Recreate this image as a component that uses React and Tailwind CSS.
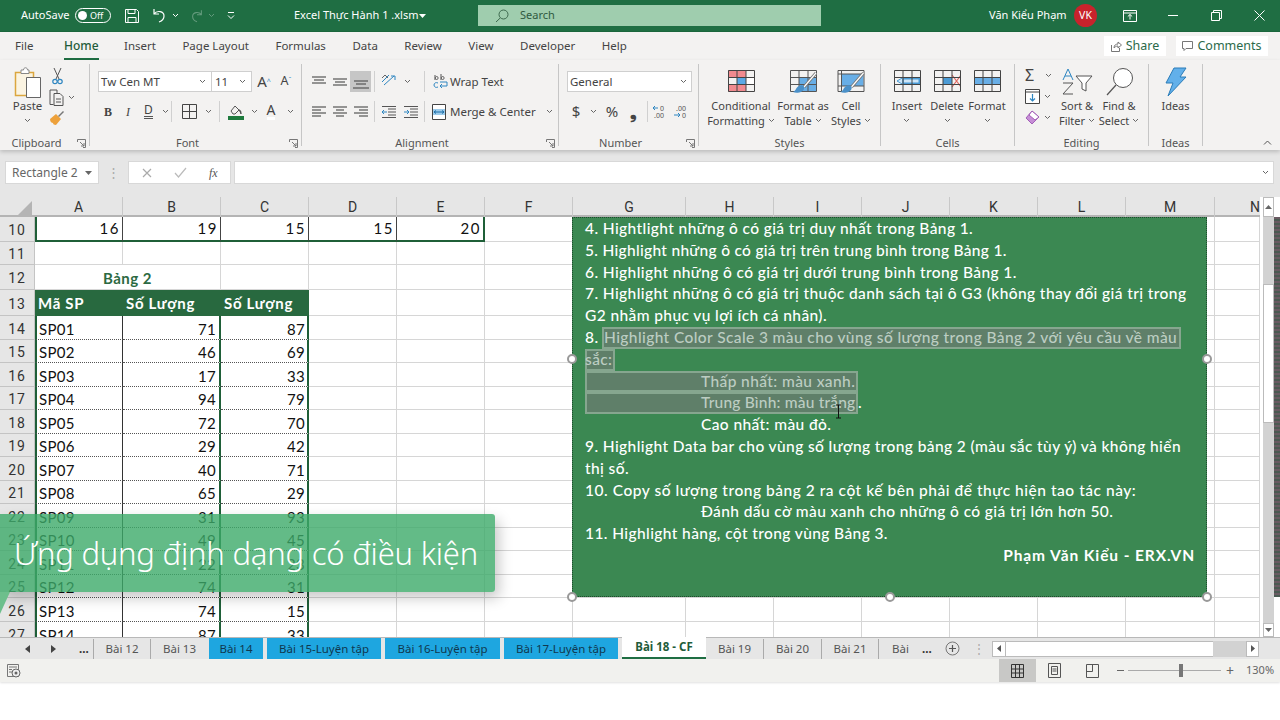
import React from 'react';

const Chev = ({ className = 'text-[#666]' }) => (
  <svg width="7" height="5" viewBox="0 0 7 5" className={className}>
    <path d="M1 1l2.500 2.500L6 1" fill="none" stroke="currentColor" strokeWidth="1" />
  </svg>
);

const Launcher = () => (
  <svg width="9" height="9" viewBox="0 0 9 9" className="text-[#777]">
    <path d="M.5 3V.5h8V8.500H6M3 3l4 4M4 7h3V4" fill="none" stroke="currentColor" strokeWidth="1" />
  </svg>
);

const Lines = ({ rows }) => (
  <svg width="18" height="16" viewBox="0 0 18 16" className="text-[#555]">
    {rows.map((r, i) => (
      <path key={i} d={`M${r[0]} ${r[2]}H${r[1]}`} stroke="currentColor" strokeWidth="1.200" />
    ))}
  </svg>
);

const TOP = [[2, 16, 3], [4, 14, 6], [2, 16, 9]];
const MID = [[2, 16, 5], [4, 14, 8], [2, 16, 11]];
const BOT = [[2, 16, 7], [4, 14, 10], [1, 17, 14]];
const LEFT = [[2, 16, 3], [2, 11, 6], [2, 16, 9], [2, 11, 12]];
const CENTER = [[2, 16, 3], [5, 13, 6], [2, 16, 9], [5, 13, 12]];
const RIGHT = [[2, 16, 3], [7, 16, 6], [2, 16, 9], [7, 16, 12]];

// grid used by the big Styles / Cells buttons
const GridIcon = ({ children, w = 27, h = 22 }) => (
  <svg width={w} height={h} viewBox="0 0 27 22">
    {children}
    <path d="M.5.500h26v21H.5zM.5 7.500h26M.5 14.500h26M9 .5v21M18 .5v21" fill="none" stroke="#444" strokeWidth="1" />
  </svg>
);

const Brush = () => (
  <g>
    <path d="M26 3L14 17" stroke="#777" strokeWidth="3" />
    <path d="M26 3L14 17" stroke="#fff" strokeWidth="1.200" />
    <path d="M9 16c3-2 6 0 5 3-1 3-7 5-11 3 3-1 3-5 6-6z" fill="#4a90c8" />
  </g>
);

const Big = ({ icon, lines, chev, last, className }) => (
  <div className={`flex flex-col items-center shrink-0 ${className}`}>
    <div className="h-[31px] pt-[6px] flex justify-center">{icon}</div>
    <div className="mt-[3px] leading-[15px] text-[11px] text-center whitespace-nowrap text-[#444]">
      <div>{lines[0]}</div>
      {lines[1] ? (
        <div className="flex items-center justify-center gap-[3px]">
          {lines[1]}
          {chev && <Chev />}
        </div>
      ) : (
        <div className="h-[15px] flex items-center justify-center">{last && <Chev />}</div>
      )}
    </div>
  </div>
);

const Group = ({ label, width, launcher, children }) => (
  <div className={`shrink-0 relative flex flex-col h-[82px] mt-[4px] border-r border-[#c6c6c6] ${width}`}>
    <div className="h-[72px] shrink-0 flex">{children}</div>
    <div className={`h-[12px] shrink-0 flex items-center justify-center text-[11px] text-[#555] leading-none ${launcher ? 'pr-[16px]' : ''}`}>{label}</div>
    {launcher && (
      <span className="absolute right-[3px] bottom-[-2px]">
        <Launcher />
      </span>
    )}
  </div>
);

function TitleBar() {
  return (
    <div className="h-8 shrink-0 bg-[#1f6e43] flex items-center text-white text-[11px] pl-[21px] border-b border-[#1b663d]">
      <span className="w-[54px]">AutoSave</span>
      <span className="w-[36px] h-[15px] rounded-full border border-white flex items-center pl-[2px] gap-[3px] text-[9px] leading-none">
        <span className="w-[9px] h-[9px] rounded-full bg-white" />
        Off
      </span>
      <svg width="16" height="16" viewBox="0 0 16 16" className="ml-[13px]">
        <path d="M1.500 1.500h11l2 2v11h-13zM4 1.500v4h7v-4M4 14.500v-5h8v5" fill="none" stroke="#fff" strokeWidth="1" />
      </svg>
      <svg width="16" height="15" viewBox="0 0 16 15" className="ml-[11px]">
        <path d="M3 1v5h5M3 6c3-4 10-3 10 2 0 3-2 5-5 6" fill="none" stroke="#fff" strokeWidth="1.200" />
      </svg>
      <Chev className="text-white ml-[5px]" />
      <svg width="14" height="14" viewBox="0 0 16 15" className="ml-[11px] opacity-30">
        <path d="M13 1v5H8M13 6C10 2 3 3 3 8c0 3 2 5 5 6" fill="none" stroke="#fff" strokeWidth="1.200" />
      </svg>
      <Chev className="text-white opacity-30 ml-[4px]" />
      <svg width="8" height="9" viewBox="0 0 8 9" className="ml-[12px]">
        <path d="M1 1.500h6M1 4.500l3 3 3-3" fill="none" stroke="#fff" strokeWidth="1" />
      </svg>
      <span className="ml-[59px] w-[124px] whitespace-nowrap">Excel Thực Hành 1 .xlsm</span>
      <svg width="7" height="4" viewBox="0 0 7 4" className="ml-[1px]">
        <path d="M0 0h7L3.500 4z" fill="#fff" />
      </svg>
      <div className="ml-[52px] w-[343px] h-[21px] bg-[#9fcdae] flex items-center pl-[17px] gap-[11px] text-[#2f5a40]">
        <svg width="14" height="14" viewBox="0 0 14 14">
          <circle cx="8.500" cy="5.500" r="4.500" fill="none" stroke="#3d6a4e" strokeWidth="1" />
          <path d="M5.200 9L1 13" stroke="#3d6a4e" strokeWidth="1" />
        </svg>
        Search
      </div>
      <span className="ml-[168px] w-[76px] whitespace-nowrap">Văn Kiểu Phạm</span>
      <span className="ml-[9px] w-[23px] h-[23px] rounded-full bg-[#c8232c] flex items-center justify-center text-[10.500px]">VK</span>
      <svg width="14" height="12" viewBox="0 0 14 12" className="ml-[26px]">
        <path d="M.5.500h13v11H.5zM.5 3h13M7 9.500V4.500M4.800 6.500L7 4.500l2.200 2" fill="none" stroke="#fff" strokeWidth="1" />
      </svg>
      <span className="ml-[31px] w-[10px] h-px bg-white" />
      <svg width="11" height="11" viewBox="0 0 11 11" className="ml-[33px]">
        <path d="M.5 2.500h8v8h-8zM2.500 2.500v-2h8v8h-2" fill="none" stroke="#fff" strokeWidth="1" />
      </svg>
      <svg width="11" height="11" viewBox="0 0 11 11" className="ml-[32px]">
        <path d="M.5.500l10 10M10.500.5l-10 10" stroke="#fff" strokeWidth="1" />
      </svg>
    </div>
  );
}

function TabRow() {
  const tabs = ['Insert', 'Page Layout', 'Formulas', 'Data', 'Review', 'View', 'Developer', 'Help'];
  return (
    <div className="h-7 shrink-0 bg-[#f3f2f1] flex items-center text-[11.500px] text-[#444] pl-[15px]">
      <span className="w-[49px]">File</span>
      <span className="relative w-[60px] text-[#1f5c3a] font-medium text-[12px]">
        Home
        <span className="absolute left-0 top-[21px] w-[35px] h-[3px] bg-[#1f6e43]" />
      </span>
      <div className="flex gap-[26.500px]">
        {tabs.map((t) => (
          <span key={t} className="whitespace-nowrap">{t}</span>
        ))}
      </div>
      <span className="ml-auto h-[20px] w-[62px] bg-white flex items-center justify-center gap-[4px] text-[#2c6a4a] text-[12.500px]">
        <svg width="11" height="11" viewBox="0 0 11 11">
          <path d="M.5 4v6.500h8V7M3 7c0-3 2-4 4-4V1l3.500 3L7 7V5C5 5 4 6 3 7z" fill="none" stroke="#777" strokeWidth="1" />
        </svg>
        Share
      </span>
      <span className="ml-[10px] mr-[12px] h-[20px] w-[92px] bg-white flex items-center justify-center gap-[4px] text-[#2c6a4a] text-[12.500px]">
        <svg width="11" height="11" viewBox="0 0 11 11">
          <path d="M.5.500h10v7H4l-2 2v-2H.5z" fill="none" stroke="#777" strokeWidth="1" />
        </svg>
        Comments
      </span>
    </div>
  );
}

const Cell = ({ w = 'w-[21px]', children, sel }) => (
  <span className={`h-[21px] flex items-center justify-center shrink-0 ${w} ${sel ? 'bg-[#c6c6c6]' : ''}`}>{children}</span>
);
const VSep = () => <span className="w-px h-[21px] bg-[#d0d0d0] shrink-0" />;

function Ribbon() {
  return (
    <div className="h-[90px] shrink-0 bg-[#f3f2f1] flex shadow-[0_2px_4px_rgba(0,0,0,0.18)] relative z-10 text-[#444]">
      <Group label="Clipboard" width="w-[90px]" launcher>
        <div className="w-[54px] flex flex-col items-center pl-[1px]">
          <svg width="28" height="32" viewBox="0 0 28 32" className="mt-[2px] shrink-0">
            <path d="M1.500 6.500h18v23h-18z" fill="#fbf4e2" stroke="#dba63f" strokeWidth="1.500" />
            <path d="M7 6.500V4h2.500c0-3 4-3 4 0H15v3.500H7z" fill="#fff" stroke="#888" strokeWidth="1" />
            <path d="M12.500 11.500h14v20h-14z" fill="#fff" stroke="#666" strokeWidth="1" />
          </svg>
          <span className="text-[11.500px] leading-[15px]">Paste</span>
          <span className="mt-[5px] flex"><Chev /></span>
        </div>
        <div className="flex flex-col pt-[3px] gap-[4px] items-start">
          <svg width="11" height="18" viewBox="0 0 11 18" className="ml-[-2px]">
            <path d="M2 1l5 11M9 1L4 12" stroke="#555" strokeWidth="1" />
            <circle cx="3" cy="14.500" r="2.200" fill="none" stroke="#2e86c1" strokeWidth="1.200" />
            <circle cx="8" cy="14.500" r="2.200" fill="none" stroke="#2e86c1" strokeWidth="1.200" />
          </svg>
          <span className="flex items-center gap-[3px] ml-[-5px]">
            <svg width="16" height="17" viewBox="0 0 16 17">
              <path d="M4.500 15.500H1V1h7v3M5 4.500h6l3 3v9H5z" fill="#f3f2f1" stroke="#555" strokeWidth="1" />
              <path d="M7 10h5M7 13h5" stroke="#555" strokeWidth="1" />
            </svg>
            <Chev />
          </span>
          <svg width="16" height="16" viewBox="0 0 16 16" className="ml-[-5px]">
            <path d="M1 9l6-5 5 5-5 6c-2 0-3-1-3-2-1 0-3-1-3-4z" fill="#eda13b" />
            <path d="M9 6l5-5 1 1-5 5z" fill="#777" />
          </svg>
        </div>
      </Group>

      <Group label="Font" width="w-[212px]" launcher>
        <div className="flex flex-col pl-[8px] pt-[7px]">
          <div className="flex items-center">
            <span className="w-[114px] h-[21px] bg-white border border-[#cfcfcf] flex items-center justify-between pl-[2px] pr-[5px] text-[11.500px]">
              Tw Cen MT <Chev />
            </span>
            <span className="w-[40px] h-[21px] bg-white border border-l-0 border-[#cfcfcf] flex items-center justify-between pl-[3px] pr-[5px] text-[11.500px]">
              11 <Chev />
            </span>
            <span className="w-[22px] text-center text-[15px] leading-none ml-[1px]">A<sup className="text-[7px] text-[#2e86c1]">^</sup></span>
            <span className="w-[22px] text-center text-[12.500px] leading-none">A<sup className="text-[7px] text-[#2e86c1]">ˇ</sup></span>
          </div>
          <div className="flex items-center mt-[9px] h-[21px]">
            <Cell w="w-[20px]"><b className="text-[12px] font-['Liberation_Serif',serif]">B</b></Cell>
            <Cell w="w-[20px]"><i className="text-[12px] font-['Liberation_Serif',serif]">I</i></Cell>
            <Cell w="w-[21px]"><span className="text-[12px] leading-[12px] border-b-[3px] border-double border-[#555]">D</span></Cell>
            <Cell w="w-[12px]"><Chev /></Cell>
            <VSep />
            <Cell w="w-[29px]">
              <svg width="15" height="15" viewBox="0 0 15 15" className="ml-[5px]">
                <path d="M.5.500h14v14H.5zM7.500.5v14M.5 7.500h14" fill="none" stroke="#444" strokeWidth="1" />
              </svg>
            </Cell>
            <Cell w="w-[15px]"><Chev /></Cell>
            <Cell w="w-[3px]" />
            <VSep />
            <Cell w="w-[27px]">
              <svg width="16" height="16" viewBox="0 0 16 16" className="ml-[4px]">
                <path d="M3 7l4-5 4 4-4 4H5z" fill="none" stroke="#555" strokeWidth="1" />
                <path d="M11 6c2 1 2 3 2 4" stroke="#555" strokeWidth="1.500" fill="none" />
                <path d="M0 12h16v4H0z" fill="#1e7a3d" />
              </svg>
            </Cell>
            <Cell w="w-[14px]"><Chev /></Cell>
            <Cell w="w-[20px]"><span className="text-[14px] leading-[14px] border-b-[3px] border-white">A</span></Cell>
            <Cell w="w-[18px]"><Chev /></Cell>
          </div>
        </div>
      </Group>

      <Group label="Alignment" width="w-[257px]" launcher>
        <div className="flex flex-col pl-[6px] pt-[7px]">
          <div className="flex items-center">
            <Cell><Lines rows={TOP} /></Cell>
            <Cell><Lines rows={MID} /></Cell>
            <Cell sel><Lines rows={BOT} /></Cell>
            <Cell w="w-[3px]" />
            <VSep />
            <Cell w="w-[28px]">
              <svg width="16" height="15" viewBox="0 0 16 15">
                <path d="M1 8l7-7M3 11l10-9" stroke="#2e86c1" strokeWidth="1" />
                <path d="M10 2h4v4" fill="none" stroke="#2e86c1" strokeWidth="1" />
                <path d="M1 4l3-3 3 3" fill="none" stroke="#666" strokeWidth="1" />
              </svg>
            </Cell>
            <Cell w="w-[8px]"><Chev /></Cell>
            <Cell w="w-[13px]" />
            <VSep />
            <span className="ml-[8px] flex items-center gap-[1px] text-[11.500px] whitespace-nowrap">
              <svg width="16" height="17" viewBox="0 0 16 17">
                <path d="M2 2v5M2 5c1-2 3-2 3 0s-2 2-3 0zM8 1v6M8 5c1-2 3-2 3 0s-2 2-3 0z" fill="none" stroke="#555" strokeWidth="1" />
                <path d="M5 10c-2-1-4 0-4 2s2 3 4 2" fill="none" stroke="#2e86c1" strokeWidth="1" />
                <path d="M7 9h7v4H7M9 11l-2 2 2 2" fill="none" stroke="#2e86c1" strokeWidth="1" />
              </svg>
              Wrap Text
            </span>
          </div>
          <div className="flex items-center mt-[9px]">
            <Cell><Lines rows={LEFT} /></Cell>
            <Cell><Lines rows={CENTER} /></Cell>
            <Cell><Lines rows={RIGHT} /></Cell>
            <Cell w="w-[3px]" />
            <VSep />
            <Cell w="w-[28px]">
              <svg width="14" height="14" viewBox="0 0 14 14">
                <path d="M6 4h8M6 7h8M6 10h8M0 12.500h14M0 1.500h14" stroke="#555" strokeWidth="1" />
                <path d="M5 7H0M2 5L0 7l2 2" fill="none" stroke="#2e86c1" strokeWidth="1" />
              </svg>
            </Cell>
            <Cell w="w-[16px]">
              <svg width="14" height="14" viewBox="0 0 14 14">
                <path d="M6 4h8M6 7h8M6 10h8M0 12.500h14M0 1.500h14" stroke="#555" strokeWidth="1" />
                <path d="M0 7h5M3 5l2 2-2 2" fill="none" stroke="#2e86c1" strokeWidth="1" />
              </svg>
            </Cell>
            <Cell w="w-[5px]" />
            <VSep />
            <span className="ml-[7px] flex items-center gap-[4px] text-[11.500px] whitespace-nowrap">
              <svg width="14" height="16" viewBox="0 0 14 16">
                <path d="M.5.500h13v15H.5z" fill="#fff" stroke="#444" strokeWidth="1" />
                <path d="M1 5h12v6H1z" fill="#9ccbeb" />
                <path d="M2 8h10M4 6.500L2 8l2 1.500M10 6.500L12 8l-2 1.500" fill="none" stroke="#1c6fa8" strokeWidth="1" />
              </svg>
              Merge & Center
              <span className="ml-[6px] flex"><Chev /></span>
            </span>
          </div>
        </div>
      </Group>

      <Group label="Number" width="w-[140px]" launcher>
        <div className="flex flex-col pl-[8px] pt-[7px]">
          <span className="w-[125px] h-[21px] bg-white border border-[#cfcfcf] flex items-center justify-between pl-[2px] pr-[4px] text-[11.500px]">
            General <Chev />
          </span>
          <div className="flex items-center mt-[9px] text-[#444]">
            <Cell w="w-[18px]"><span className="text-[15px]">$</span></Cell>
            <Cell w="w-[17px]"><Chev /></Cell>
            <Cell w="w-[20px]"><span className="text-[15px]">%</span></Cell>
            <Cell w="w-[22px]"><b className="text-[17px] leading-[14px]">❟</b></Cell>
            <Cell w="w-[3px]" />
            <VSep />
            <Cell w="w-[24px]">
              <svg width="16" height="15" viewBox="0 0 16 15" className="overflow-visible">
                <text x="8" y="6.500" fontSize="7" fill="#555" fontFamily="Noto Sans">0</text>
                <text x="2" y="14" fontSize="7" fill="#555" fontFamily="Noto Sans">.00</text>
                <path d="M6 4H1M3 2L1 4l2 2" fill="none" stroke="#2e86c1" strokeWidth="1" />
              </svg>
            </Cell>
            <Cell w="w-[18px]">
              <svg width="16" height="15" viewBox="0 0 16 15" className="overflow-visible">
                <text x="3" y="6.500" fontSize="7" fill="#555" fontFamily="Noto Sans">.00</text>
                <text x="9" y="14" fontSize="7" fill="#555" fontFamily="Noto Sans">0</text>
                <path d="M1 11h6M5 9l2 2-2 2" fill="none" stroke="#2e86c1" strokeWidth="1" />
              </svg>
            </Cell>
          </div>
        </div>
      </Group>

      <Group label="Styles" width="w-[182px]">
        <Big
          className="w-[84px]"
          chev
          lines={['Conditional', 'Formatting']}
          icon={
            <GridIcon>
              <path d="M0 0h18v7H0zM9 14h9V7H9zM0 14h18v8H0z" fill="#f08a8f" />
              <path d="M9 7h9v7H9z" fill="#5aa9e6" />
              <path d="M18 7h9v7h-9z" fill="#fff" />
            </GridIcon>
          }
        />
        <Big
          className="w-[40px]"
          chev
          lines={['Format as', 'Table']}
          icon={
            <svg width="27" height="23" viewBox="0 0 27 23">
              <path d="M9 7h17v15H9z" fill="#68aee6" />
              <path d="M.5.500h26v21H.5zM.5 7.500h26M.5 14.500h26M9 .5v21M18 .5v21" fill="none" stroke="#555" strokeWidth="1" />
              <Brush />
            </svg>
          }
        />
        <Big
          className="w-[56px]"
          chev
          lines={['Cell', 'Styles']}
          icon={
            <svg width="28" height="23" viewBox="0 0 27 23">
              <path d="M4 4h22v12H4z" fill="#68aee6" />
              <path d="M.5.500h26v21H.5zM.5 4h26M4 .5v21M.5 16h26" fill="none" stroke="#555" strokeWidth="1" />
              <Brush />
            </svg>
          }
        />
      </Group>

      <Group label="Cells" width="w-[134px]">
        <Big
          className="w-[52px]"
          last
          lines={['Insert']}
          icon={
            <GridIcon>
              <path d="M7 7.500h20v7H7z" fill="#4b9bd5" />
              <path d="M9 7.500L3 11l6 3.500zM9 9h16v4H9z" fill="#cfe6f7" stroke="#4b9bd5" />
            </GridIcon>
          }
        />
        <Big
          className="w-[28px]"
          last
          lines={['Delete']}
          icon={
            <GridIcon>
              <path d="M9 7.500h9v7H9z" fill="#4b9bd5" />
              <path d="M18 5l9 12M27 5l-9 12" stroke="#e0675f" strokeWidth="1.200" />
            </GridIcon>
          }
        />
        <Big
          className="w-[52px]"
          last
          lines={['Format']}
          icon={
            <GridIcon>
              <path d="M1 7.500h25v7H1z" fill="#68aee6" />
            </GridIcon>
          }
        />
      </Group>

      <Group label="Editing" width="w-[134px]">
        <div className="w-[47px] flex flex-col pl-[10px] pt-[1px] gap-[4px]">
          <span className="flex items-center gap-[5px] h-[18px] mt-[1px]">
            <span className="text-[16px] leading-none w-[14px]">Σ</span>
            <span className="ml-[1px] flex"><Chev /></span>
          </span>
          <span className="flex items-center gap-[4px] h-[17px]">
            <svg width="15" height="15" viewBox="0 0 15 15">
              <path d="M.5.500h14v14H.5zM.5 3h14" fill="#fff" stroke="#444" strokeWidth="1" />
              <path d="M7.500 5v7M5 9.500l2.500 2.500L10 9.500" fill="none" stroke="#2e86c1" strokeWidth="1.200" />
            </svg>
            <Chev />
          </span>
          <span className="flex items-center gap-[4px] h-[17px]">
            <svg width="15" height="15" viewBox="0 0 15 15">
              <path d="M1 8l6-7 7 6-7 7z" fill="#c68ed6" stroke="#a35fb8" strokeWidth="1" />
              <path d="M4 5l6 5 4-3-7-6z" fill="#fff" stroke="#a35fb8" strokeWidth="1" />
            </svg>
            <Chev />
          </span>
        </div>
        <Big
          className="w-[30px]"
          chev
          lines={['Sort &', 'Filter']}
          icon={
            <svg width="30" height="27" viewBox="0 0 30 27" className="mt-[-2px] overflow-visible">
              <path d="M1 12L6 1l5 11M3 8h6" fill="none" stroke="#2e86c1" strokeWidth="1" />
              <path d="M1 15h10L1 26h10" fill="none" stroke="#555" strokeWidth="1" />
              <path d="M14 8h16l-6 7v8l-4-2v-6z" fill="#fff" stroke="#555" strokeWidth="1" />
            </svg>
          }
        />
        <Big
          className="w-[54px]"
          chev
          lines={['Find &', 'Select']}
          icon={
            <svg width="30" height="30" viewBox="0 0 30 30" className="mt-[-3px]">
              <circle cx="19" cy="11" r="9.500" fill="#fff" stroke="#555" strokeWidth="1" />
              <path d="M12 18L3 28" stroke="#555" strokeWidth="1.200" />
            </svg>
          }
        />
      </Group>

      <Group label="Ideas" width="w-[54px]">
        <Big
          className="w-[53px]"
          lines={['Ideas']}
          icon={
            <svg width="22" height="30" viewBox="0 0 22 30" className="mt-[-3px]">
              <path d="M9 1h12l-6 9h6L3 29l5-13H1z" fill="#62b0ea" stroke="#2b7cb8" strokeWidth="1" />
            </svg>
          }
        />
      </Group>

      <svg width="9" height="5" viewBox="0 0 9 5" className="self-end mb-[5px] ml-[60px]">
        <path d="M1 4.500l3.500-3.500L8 4.500" fill="none" stroke="#555" strokeWidth="1" />
      </svg>
    </div>
  );
}

function FormulaBar() {
  return (
    <div className="h-[47px] shrink-0 bg-[#e6e6e6] flex pl-[5px] pt-[11px] text-[#666]">
      <div className="w-[94px] h-[23px] bg-white border border-[#d8d8d8] flex items-center justify-between px-[6px] text-[12px]">
        Rectangle 2
        <svg width="7" height="4" viewBox="0 0 7 4"><path d="M0 0h7L3.500 4z" fill="#666" /></svg>
      </div>
      <span className="w-[29px] h-[23px] flex items-center justify-center text-[#aaa] text-[13px]">⋮</span>
      <div className="w-[103px] h-[23px] bg-white border border-[#d8d8d8] flex items-center pl-[13px]">
        <svg width="10" height="10" viewBox="0 0 10 10"><path d="M1 1l8 8M9 1l-8 8" stroke="#aaa" strokeWidth="1.200" /></svg>
        <svg width="13" height="11" viewBox="0 0 13 11" className="ml-[22px]"><path d="M1 6l3.500 4L12 1" fill="none" stroke="#bbb" strokeWidth="1.200" /></svg>
        <i className="ml-[22px] text-[12px] text-[#555] font-['Liberation_Serif',serif]">fx</i>
      </div>
      <div className="ml-[3px] w-[1040px] h-[23px] bg-white border border-[#d8d8d8] flex items-center justify-end pr-[4px]">
        <Chev />
      </div>
    </div>
  );
}

const COLUMNS = ['A', 'B', 'C', 'D', 'E', 'F', 'G', 'H', 'I', 'J', 'K', 'L', 'M', 'N'];
const GRID = "grid grid-cols-[35px_88px_98px_88px_88px_88px_88px_113px_88px_88px_88px_88px_88px_89px_45px]";

const DATA = [
  ['14', 'h-[24px]', 'SP01', 71, 87],
  ['15', 'h-[23px]', 'SP02', 46, 69],
  ['16', 'h-[24px]', 'SP03', 17, 33],
  ['17', 'h-[23px]', 'SP04', 94, 79],
  ['18', 'h-[24px]', 'SP05', 72, 70],
  ['19', 'h-[23px]', 'SP06', 29, 42],
  ['20', 'h-[24px]', 'SP07', 40, 71],
  ['21', 'h-[23px]', 'SP08', 65, 29],
  ['22', 'h-[24px]', 'SP09', 31, 93],
  ['23', 'h-[23px]', 'SP10', 49, 45],
  ['24', 'h-[24px]', 'SP11', 22, 23],
  ['25', 'h-[23px]', 'SP12', 74, 31],
  ['26', 'h-[24px]', 'SP13', 74, 15],
  ['27', 'h-[24px]', 'SP14', 87, 33],
];

const RowHead = ({ n, h }) => (
  <div className={`${h} bg-[#e6e6e6] border-b border-r border-[#c4c4c4] flex items-center justify-center pt-[3px] text-[14px] text-[#333] tracking-[1px] font-['Roboto',sans-serif]`}>{n}</div>
);
const Blank = ({ h, className = '' }) => <div className={`${h} border-r border-b border-[#d6d6d6] ${className}`} />;
const Blanks = ({ h, from }) => COLUMNS.slice(from).map((c) => <Blank key={c} h={h} />);

function Sheet() {
  const cellFont = "font-['Lato',sans-serif] text-[15px] text-[#111]";
  const dotted = 'border-b border-b-[#555] [border-bottom-style:dotted]';
  return (
    <div className="h-[440px] shrink-0 relative overflow-hidden bg-white">
      {/* column header */}
      <div className={`${GRID} h-[20px] bg-[#e6e6e6] border-b-2 border-[#b4b4b4] w-[1260px]`}>
        <div className="flex items-end justify-end pr-[3px] pb-[2px]">
          <svg width="15" height="15" viewBox="0 0 15 15"><path d="M15 0v15H0z" fill="#b4b4b4" /></svg>
        </div>
        {COLUMNS.map((c) => (
          <div key={c} className={`border-r border-[#c8c8c8] flex items-center justify-center text-[14px] text-[#333] font-['Roboto',sans-serif] ${c === 'N' ? 'justify-end pr-0 border-r-0' : ''}`}>{c}</div>
        ))}
      </div>

      <div className={`${GRID} w-[1260px] border-r border-[#bbb] ${cellFont}`}>
        <RowHead n="10" h="h-[25px]" />
        {[16, 19, 15, 15, 20].map((v, i) => (
          <div key={i} className={`h-[25px] border-b-2 border-b-[#1f5f38] flex items-center justify-end pr-[2px] tracking-[1.500px] border-r ${i === 4 ? 'border-r-2 border-r-[#1f5f38]' : 'border-r-[#444]'} ${i === 0 ? 'border-l-2 border-l-[#1f5f38]' : ''}`}>{v}</div>
        ))}
        <Blanks h="h-[25px]" from={5} />

        <RowHead n="11" h="h-[23px]" />
        <Blanks h="h-[23px]" from={0} />

        <RowHead n="12" h="h-[25px]" />
        <div className="col-span-2 h-[25px] border-r border-b border-[#d6d6d6] flex items-center justify-center pt-[3px] font-bold text-[#2c6a42] tracking-[0.500px]">Bảng 2</div>
        <Blanks h="h-[25px]" from={2} />

        <RowHead n="13" h="h-[26px]" />
        {['Mã SP', 'Số Lượng', 'Số Lượng'].map((t, i) => (
          <div key={i} className="h-[26px] bg-[#28693f] text-white font-bold flex items-center pl-[3px] tracking-[0.700px] whitespace-nowrap">{t}</div>
        ))}
        <Blanks h="h-[26px]" from={3} />

        {DATA.map(([n, h, sp, a, b]) => (
          <React.Fragment key={n}>
            <RowHead n={n} h={h} />
            <div className={`${h} border-l-2 border-l-[#1f5f38] border-r border-r-[#333] ${dotted} flex items-center pt-[3px] pl-[2px] tracking-[0.300px]`}>{sp}</div>
            <div className={`${h} border-r-2 border-r-[#1f5f38] ${dotted} flex items-center justify-end pt-[3px] pr-[3px] tracking-[0.300px]`}>{a}</div>
            <div className={`${h} border-r-2 border-r-[#1f5f38] ${dotted} flex items-center justify-end pt-[3px] pr-[2px] tracking-[0.300px]`}>{b}</div>
            <Blanks h={h} from={3} />
          </React.Fragment>
        ))}
      </div>

      {/* text box sitting on the sheet */}
      <TextBox />

      {/* video lower third */}
      <div className="absolute left-0 top-[317px] w-[495px] h-[78px] rounded-r-[3px] bg-[#3caa69]/80 shadow-[4px_6px_14px_rgba(0,0,0,0.22)] flex items-center pl-[14px] text-white text-[31px] tracking-[-0.200px] font-['Noto_Sans',sans-serif] font-light whitespace-nowrap">
        Ứng dụng định dạng có điều kiện
      </div>
      <svg width="10" height="22" viewBox="0 0 10 22" className="absolute left-0 top-[395px]">
        <path d="M0 22V0h10z" fill="#6dbf8c" />
      </svg>

      {/* vertical scroll bar */}
      <div className="absolute left-[1263px] top-0 w-[11px] h-full bg-[#d2d2d2] flex flex-col justify-between">
        <span className="h-[20px] bg-white border border-[#bbb] flex items-center justify-center">
          <svg width="7" height="4" viewBox="0 0 7 4"><path d="M0 4h7L3.500 0z" fill="#666" /></svg>
        </span>
        <span className="h-[14px] bg-white border border-[#bbb] flex items-center justify-center">
          <svg width="7" height="4" viewBox="0 0 7 4"><path d="M0 0h7L3.500 4z" fill="#666" /></svg>
        </span>
      </div>
      <span className="absolute left-[1263px] top-[87px] w-[11px] h-[139px] bg-white border border-[#bbb]" />
      <span className="absolute left-[1274px] top-[20px] w-[6px] h-[380px] bg-[repeating-linear-gradient(0deg,#4a5a52_0px,#4a5a52_2px,#6a5a62_2px,#6a5a62_4px)]" />
    </div>
  );
}

const Handle = ({ className }) => (
  <span className={`absolute w-[10px] h-[10px] rounded-full bg-white border-2 border-[#999] ${className}`} />
);

function TextBox() {
  const L = 'whitespace-nowrap h-[21.800px]';
  const sel = 'bg-[#5f7f69] shadow-[inset_0_0_0_2px_#86a68f] text-[#bccdc2]';
  return (
    <div className="absolute left-[572px] top-[20px] w-[635px] h-[380px] bg-[#3b8852] border border-dotted border-[#1e4a2c] text-white font-['Lato',sans-serif] font-medium text-[15.500px] leading-[21.800px] tracking-[0.400px] pl-[12px]">
      <div className={L}>4. Hightlight những ô có giá trị duy nhất trong Bảng 1.</div>
      <div className={`${L} tracking-[0.300px]`}>5. Highlight những ô có giá trị trên trung bình trong Bảng 1.</div>
      <div className={L}>6. Highlight những ô có giá trị dưới trung bình trong Bảng 1.</div>
      <div className={L}>7. Highlight những ô có giá trị thuộc danh sách tại ô G3 (không thay đổi giá trị trong</div>
      <div className={L}>G2 nhằm phục vụ lợi ích cá nhân).</div>
      <div className={`${L} flex`}>
        <span className="w-[17px] shrink-0">8.</span>
        <span className={`${sel} w-[579px] pl-[2px]`}>Highlight Color Scale 3 màu cho vùng số lượng trong Bảng 2 với yêu cầu về màu</span>
      </div>
      <div className={L}><span className={`${sel} inline-block w-[30px]`}>sắc:</span></div>
      <div className={L}><div className={`${sel} w-[273px] pl-[116px]`}>Thấp nhất: màu xanh.</div></div>
      <div className={`${L} flex`}>
        <div className={`${sel} w-[273px] pl-[116px] tracking-[0.200px]`}>Trung Bình: màu trắng</div>
        <span>.</span>
      </div>
      <div className={`${L} pl-[116px]`}>Cao nhất: màu đỏ.</div>
      <div className={L}>9. Highlight Data bar cho vùng số lượng trong bảng 2 (màu sắc tùy ý) và không hiển</div>
      <div className={L}>thị số.</div>
      <div className={`${L} tracking-[0.530px]`}>10. Copy số lượng trong bảng 2 ra cột kế bên phải để thực hiện tao tác này:</div>
      <div className={`${L} pl-[116px]`}>Đánh dấu cờ màu xanh cho những ô có giá trị lớn hơn 50.</div>
      <div className={L}>11. Highlight hàng, cột trong vùng Bảng 3.</div>
      <div className={`${L} text-right pr-[11px] font-bold tracking-[0.900px]`}>Phạm Văn Kiểu - ERX.VN</div>
      <Handle className="left-[-6px] top-[136px]" />
      <Handle className="right-[-6px] top-[136px]" />
      <Handle className="left-[-6px] bottom-[-6px]" />
      <Handle className="left-[312px] bottom-[-6px]" />
      <Handle className="right-[-6px] bottom-[-6px]" />
      <svg width="7" height="16" viewBox="0 0 7 16" className="absolute left-[262px] top-[186px]">
        <path d="M1 1h5M3.500 1v13M1 14h5" stroke="#111" strokeWidth="1" fill="none" />
      </svg>
    </div>
  );
}

function SheetTabs() {
  const Sep = () => <span className="w-px h-[20px] bg-[#aaa] shrink-0" />;
  const Plain = ({ children, w }) => <span className={`${w} shrink-0 text-center whitespace-nowrap`}>{children}</span>;
  const Blue = ({ children, w }) => (
    <span className={`${w} h-[21px] mr-[4px] shrink-0 bg-[#1ea6e0] text-[#10384f] flex items-center justify-center whitespace-nowrap`}>{children}</span>
  );
  return (
    <div className="h-[22px] shrink-0 bg-[#e6e6e6] border-t border-[#b8b8b8] flex items-center text-[11.500px] text-[#555] relative">
      <svg width="5" height="8" viewBox="0 0 5 8" className="ml-[25px]"><path d="M5 0v8L0 4z" fill="#444" /></svg>
      <svg width="5" height="8" viewBox="0 0 5 8" className="ml-[21px]"><path d="M0 0v8l5-4z" fill="#444" /></svg>
      <span className="w-[10px] ml-[23px] text-[#333] font-bold">...</span>
      <span className="ml-[4px]" />
      <Sep />
      <Plain w="w-[56px]">Bài 12</Plain>
      <Sep />
      <Plain w="w-[57px]">Bài 13</Plain>
      <span className="ml-[1px]" />
      <Blue w="w-[54px]">Bài 14</Blue>
      <Blue w="w-[114px]">Bài 15-Luyện tập</Blue>
      <Blue w="w-[115px]">Bài 16-Luyện tập</Blue>
      <Blue w="w-[114px]">Bài 17-Luyện tập</Blue>
      <span className="w-[84px] h-[22px] mt-[-1px] shrink-0 bg-white border-b-2 border-[#1f6e43] flex items-center justify-center font-bold text-[#1f5c3a]">Bài 18 - CF</span>
      <Plain w="w-[57px]">Bài 19</Plain>
      <Sep />
      <Plain w="w-[57px]">Bài 20</Plain>
      <Sep />
      <Plain w="w-[56px]">Bài 21</Plain>
      <Sep />
      <Plain w="w-[43px]">Bài</Plain>
      <span className="w-[30px] text-[#333] font-bold">...</span>
      <svg width="15" height="15" viewBox="0 0 15 15" className="shrink-0 ml-[-7px]">
        <circle cx="7.500" cy="7.500" r="6.500" fill="none" stroke="#777" strokeWidth="1" />
        <path d="M7.500 4v7M4 7.500h7" stroke="#555" strokeWidth="1.200" />
      </svg>
      <span className="w-[20px] ml-[9px] text-center text-[#aaa]">⋮</span>
      <div className="ml-[3px] w-[267px] h-[16px] flex bg-[#d2d2d2] shrink-0">
        <span className="w-[14px] bg-white border border-[#bbb] flex items-center justify-center">
          <svg width="4" height="7" viewBox="0 0 4 7"><path d="M4 0v7L0 3.500z" fill="#555" /></svg>
        </span>
        <span className="w-[207px] bg-white border-y border-[#bbb]" />
        <span className="w-[33px]" />
        <span className="w-[13px] bg-white border border-[#bbb] flex items-center justify-center">
          <svg width="4" height="7" viewBox="0 0 4 7"><path d="M0 0v7l4-3.500z" fill="#555" /></svg>
        </span>
      </div>
    </div>
  );
}

function StatusBar() {
  return (
    <div className="h-[23px] shrink-0 bg-[#f1f1ee] shadow-[0_1px_2px_rgba(0,0,0,0.12)] flex items-center text-[11px] text-[#666] pl-[7px]">
      <svg width="14" height="15" viewBox="0 0 14 15">
        <path d="M.5 1.500h11v12H.5z" fill="none" stroke="#777" strokeWidth="1" />
        <path d="M2 4h8M2 6.500h3M2 9h3" stroke="#777" strokeWidth="1" />
        <circle cx="9" cy="10" r="4" fill="#eee" stroke="#666" strokeWidth="1" />
        <circle cx="9" cy="10" r="1.500" fill="#666" />
      </svg>
      <span className="ml-[978px] w-[37px] h-[23px] bg-[#c8c8c6] flex items-center justify-center">
        <svg width="13" height="14" viewBox="0 0 13 14"><path d="M.5.500h12v13H.5zM4.500.5v13M8.500.5v13M.5 5h12M.5 9h12" fill="none" stroke="#333" strokeWidth="1" /></svg>
      </span>
      <svg width="13" height="15" viewBox="0 0 13 15" className="ml-[12px]">
        <path d="M.5.500h12v14H.5z" fill="none" stroke="#555" strokeWidth="1" />
        <path d="M3.500 3.500h6v8h-6zM4.500 6h4M4.500 8h4" fill="none" stroke="#555" strokeWidth="1" />
      </svg>
      <svg width="13" height="14" viewBox="0 0 13 14" className="ml-[25px]">
        <path d="M.5.500h12v13H.5zM6.500.5v7H.5" fill="none" stroke="#555" strokeWidth="1" />
      </svg>
      <span className="ml-[18px] w-[7px] h-px bg-[#666]" />
      <div className="ml-[4px] w-[93px] h-px bg-[#aaa] relative">
        <span className="absolute left-[51px] top-[-6px] w-[4px] h-[13px] bg-[#777]" />
      </div>
      <span className="ml-[2px] w-[14px] text-center text-[14px] leading-none">+</span>
      <span className="ml-[9px] whitespace-nowrap">130%</span>
    </div>
  );
}

export default function App() {
  return (
    <div className="w-[1280px] h-[720px] overflow-hidden bg-white flex flex-col font-['Noto_Sans',sans-serif]">
      <TitleBar />
      <TabRow />
      <Ribbon />
      <FormulaBar />
      <Sheet />
      <SheetTabs />
      <StatusBar />
    </div>
  );
}
